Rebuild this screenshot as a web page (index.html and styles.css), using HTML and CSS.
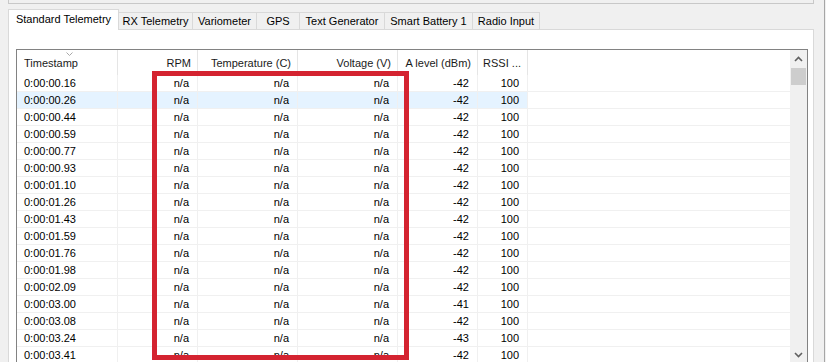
FILE: index.html
```html
<!DOCTYPE html>
<html lang="en">
<head>
  <meta charset="UTF-8">
  <title>Standard Telemetry</title>
<link rel="stylesheet" href="styles.css">
</head>
<body>
<div class="window">
  <div class="topbox"></div>

  <div class="tabs">
    <div class="tab active">Standard Telemetry</div>
    <div class="tab">RX Telemetry</div>
    <div class="tab">Variometer</div>
    <div class="tab">GPS</div>
    <div class="tab">Text Generator</div>
    <div class="tab">Smart Battery 1</div>
    <div class="tab">Radio Input</div>
  </div>

  <div class="panel">
    <div class="frame">
      <div class="list">
        <div class="row head">
          <div class="cell c-time">Timestamp
            <svg class="sort" width="7" height="4" viewBox="0 0 7 4"><polyline points="0.5,0.5 3.5,3.5 6.5,0.5" fill="none" stroke="#a8a8a8" stroke-width="1"/></svg>
          </div>
          <div class="cell c-rpm">RPM</div>
          <div class="cell c-temp">Temperature (C)</div>
          <div class="cell c-volt">Voltage (V)</div>
          <div class="cell c-level">A level (dBm)</div>
          <div class="cell c-rssi">RSSI ...</div>
          <div class="cell fill"></div>
        </div>

        <div class="row"><div class="cell c-time">0:00:00.16</div><div class="cell c-rpm">n/a</div><div class="cell c-temp">n/a</div><div class="cell c-volt">n/a</div><div class="cell c-level">-42</div><div class="cell c-rssi">100</div><div class="cell fill"></div></div>
        <div class="row sel"><div class="cell c-time">0:00:00.26</div><div class="cell c-rpm">n/a</div><div class="cell c-temp">n/a</div><div class="cell c-volt">n/a</div><div class="cell c-level">-42</div><div class="cell c-rssi">100</div><div class="cell fill"></div></div>
        <div class="row"><div class="cell c-time">0:00:00.44</div><div class="cell c-rpm">n/a</div><div class="cell c-temp">n/a</div><div class="cell c-volt">n/a</div><div class="cell c-level">-42</div><div class="cell c-rssi">100</div><div class="cell fill"></div></div>
        <div class="row"><div class="cell c-time">0:00:00.59</div><div class="cell c-rpm">n/a</div><div class="cell c-temp">n/a</div><div class="cell c-volt">n/a</div><div class="cell c-level">-42</div><div class="cell c-rssi">100</div><div class="cell fill"></div></div>
        <div class="row"><div class="cell c-time">0:00:00.77</div><div class="cell c-rpm">n/a</div><div class="cell c-temp">n/a</div><div class="cell c-volt">n/a</div><div class="cell c-level">-42</div><div class="cell c-rssi">100</div><div class="cell fill"></div></div>
        <div class="row"><div class="cell c-time">0:00:00.93</div><div class="cell c-rpm">n/a</div><div class="cell c-temp">n/a</div><div class="cell c-volt">n/a</div><div class="cell c-level">-42</div><div class="cell c-rssi">100</div><div class="cell fill"></div></div>
        <div class="row"><div class="cell c-time">0:00:01.10</div><div class="cell c-rpm">n/a</div><div class="cell c-temp">n/a</div><div class="cell c-volt">n/a</div><div class="cell c-level">-42</div><div class="cell c-rssi">100</div><div class="cell fill"></div></div>
        <div class="row"><div class="cell c-time">0:00:01.26</div><div class="cell c-rpm">n/a</div><div class="cell c-temp">n/a</div><div class="cell c-volt">n/a</div><div class="cell c-level">-42</div><div class="cell c-rssi">100</div><div class="cell fill"></div></div>
        <div class="row"><div class="cell c-time">0:00:01.43</div><div class="cell c-rpm">n/a</div><div class="cell c-temp">n/a</div><div class="cell c-volt">n/a</div><div class="cell c-level">-42</div><div class="cell c-rssi">100</div><div class="cell fill"></div></div>
        <div class="row"><div class="cell c-time">0:00:01.59</div><div class="cell c-rpm">n/a</div><div class="cell c-temp">n/a</div><div class="cell c-volt">n/a</div><div class="cell c-level">-42</div><div class="cell c-rssi">100</div><div class="cell fill"></div></div>
        <div class="row"><div class="cell c-time">0:00:01.76</div><div class="cell c-rpm">n/a</div><div class="cell c-temp">n/a</div><div class="cell c-volt">n/a</div><div class="cell c-level">-42</div><div class="cell c-rssi">100</div><div class="cell fill"></div></div>
        <div class="row"><div class="cell c-time">0:00:01.98</div><div class="cell c-rpm">n/a</div><div class="cell c-temp">n/a</div><div class="cell c-volt">n/a</div><div class="cell c-level">-42</div><div class="cell c-rssi">100</div><div class="cell fill"></div></div>
        <div class="row"><div class="cell c-time">0:00:02.09</div><div class="cell c-rpm">n/a</div><div class="cell c-temp">n/a</div><div class="cell c-volt">n/a</div><div class="cell c-level">-42</div><div class="cell c-rssi">100</div><div class="cell fill"></div></div>
        <div class="row"><div class="cell c-time">0:00:03.00</div><div class="cell c-rpm">n/a</div><div class="cell c-temp">n/a</div><div class="cell c-volt">n/a</div><div class="cell c-level">-41</div><div class="cell c-rssi">100</div><div class="cell fill"></div></div>
        <div class="row"><div class="cell c-time">0:00:03.08</div><div class="cell c-rpm">n/a</div><div class="cell c-temp">n/a</div><div class="cell c-volt">n/a</div><div class="cell c-level">-42</div><div class="cell c-rssi">100</div><div class="cell fill"></div></div>
        <div class="row"><div class="cell c-time">0:00:03.24</div><div class="cell c-rpm">n/a</div><div class="cell c-temp">n/a</div><div class="cell c-volt">n/a</div><div class="cell c-level">-43</div><div class="cell c-rssi">100</div><div class="cell fill"></div></div>
        <div class="row"><div class="cell c-time">0:00:03.41</div><div class="cell c-rpm">n/a</div><div class="cell c-temp">n/a</div><div class="cell c-volt">n/a</div><div class="cell c-level">-42</div><div class="cell c-rssi">100</div><div class="cell fill"></div></div>
      </div>

      <div class="vscroll">
        <div class="sb-btn">
          <svg width="9" height="6" viewBox="0 0 9 6"><polyline points="1,5 4.5,1.5 8,5" fill="none" stroke="#606060" stroke-width="1.6"/></svg>
        </div>
        <div class="sb-thumb"></div>
        <div class="sb-track"></div>
        <div class="sb-btn">
          <svg width="9" height="6" viewBox="0 0 9 6"><polyline points="1,1 4.5,4.5 8,1" fill="none" stroke="#606060" stroke-width="1.6"/></svg>
        </div>
      </div>
    </div>
  </div>

  <!-- annotation drawn over the grid -->
  <div class="redbox"></div>
</div>
</body>
</html>
```

FILE: styles.css
```css
body {
  margin: 0;
  background: #f0f0f0;
  font-family: "Liberation Sans", Arial, sans-serif;
  font-size: 11px;
  color: #000;
  height: 362px;
  overflow: hidden;
}

.window {
  position: relative;
  width: 825px;
  height: 362px;
  padding-left: 8px;
  box-sizing: border-box;
  border-right: 1px solid #a6a6a6;
  overflow: hidden;
}

.topbox {
  width: 806px;
  height: 4px;
  box-sizing: border-box;
  border: 1px solid #c8c8c8;
  border-top: 0;
}

/* tab strip */
.tabs {
  display: flex;
  align-items: flex-end;
  height: 21px;
  margin-top: 5px;
  margin-bottom: -1px;
  position: relative;
  z-index: 1;
}

.tab {
  height: 18px;
  box-sizing: border-box;
  border: 1px solid #d9d9d9;
  background: #f0f0f0;
  margin-right: -1px;
  line-height: 16px;
  text-align: center;
  white-space: nowrap;
}

.tab.active {
  height: 21px;
  background: #fff;
  border-bottom: 0;
  line-height: 19px;
}

.tab:nth-child(1) { width: 111px; }
.tab:nth-child(2) { width: 75px; }
.tab:nth-child(3) { width: 65px; }
.tab:nth-child(4) { width: 44px; }
.tab:nth-child(5) { width: 86px; }
.tab:nth-child(6) { width: 89px; }
.tab:nth-child(7) { width: 68px; }

.panel {
  width: 806px;
  height: 340px;
  box-sizing: border-box;
  border: 1px solid #d9d9d9;
  background: #fff;
  padding: 19px 5px 0 7px;
}

/* list view */
.frame {
  display: flex;
  height: 315px;
  box-sizing: border-box;
  border: 1px solid #828282;
}

.list {
  flex: 1;
}

.row {
  display: flex;
  height: 17px;
  box-sizing: border-box;
  border-bottom: 1px solid #f0f0f0;
}

.row.head {
  height: 25px;
  border-bottom: 0;
}

.cell {
  box-sizing: border-box;
  border-right: 1px solid #f0f0f0;
  padding: 0 8px 0 4px;
  text-align: right;
  line-height: 17px;
  white-space: nowrap;
  overflow: hidden;
}

.head .cell {
  position: relative;
  border-right-color: #e5e5e5;
  line-height: 26px;
  padding-right: 6px;
  color: #1a1a1a;
}

.row.sel .cell {
  background: #e5f3ff;
}

.row.sel .cell.fill {
  background: none;
}

.c-time { width: 101px; text-align: left; padding-left: 7px; }
.c-rpm { width: 80px; }
.c-temp { width: 100px; }
.c-volt { width: 100px; }
.c-level { width: 80px; }
.c-rssi { width: 50px; }

.cell.fill {
  flex: 1;
  border-right: 0;
}

.sort {
  position: absolute;
  left: 49px;
  top: 2px;
}

/* scroll bar */
.vscroll {
  width: 17px;
  background: #f0f0f0;
  display: flex;
  flex-direction: column;
}

.sb-btn {
  height: 17px;
  display: flex;
  align-items: center;
  justify-content: center;
}

.sb-thumb {
  height: 17px;
  margin: 1px 1px 0;
  background: #cdcdcd;
}

.sb-track {
  flex: 1;
}

.redbox {
  position: absolute;
  left: 152px;
  top: 71px;
  width: 257px;
  height: 289px;
  box-sizing: border-box;
  border: 5px solid #d42330;
}
```
